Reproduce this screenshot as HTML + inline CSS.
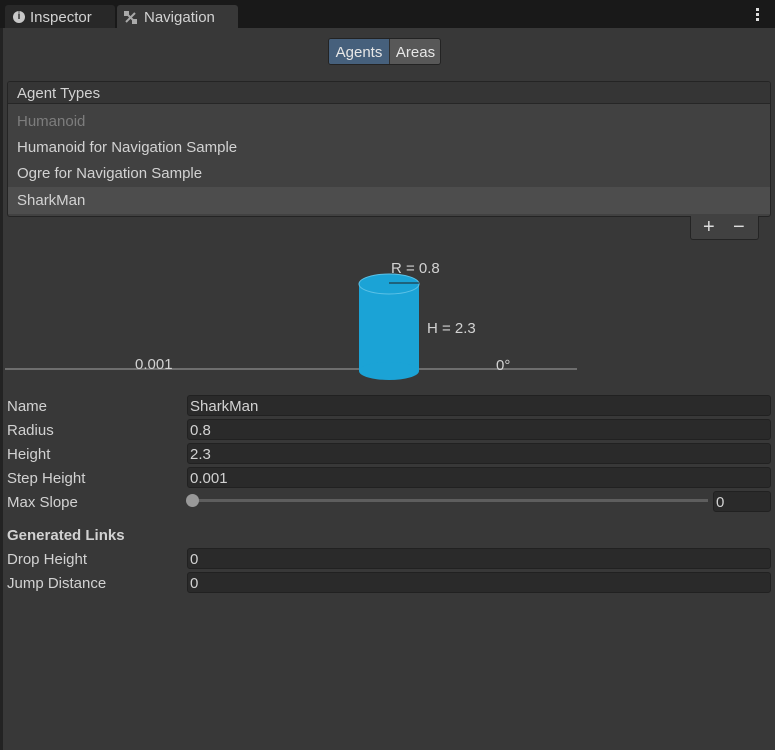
<!DOCTYPE html><html><head><style>
*{margin:0;padding:0;box-sizing:border-box}
body{width:775px;height:750px;background:#383838;font-family:"Liberation Sans",sans-serif;font-size:15px;color:#d2d2d2;position:relative;overflow:hidden}
.a{position:absolute}
.fld{position:absolute;left:187px;width:584px;height:21px;background:#2a2a2a;border:1px solid #212121;border-radius:3px;padding-left:2px;padding-top:1px;line-height:20px;color:#d2d2d2}
.lbl{position:absolute;left:7px;line-height:20px}
</style></head><body>
<div class="a" style="left:0;top:0;width:775px;height:28px;background:#191919"></div>
<div class="a" style="left:0;top:28px;width:3px;height:722px;background:#232323"></div>
<div class="a" style="left:5px;top:5px;width:110px;height:23px;background:#282828;border-radius:3px 3px 0 0"></div>
<div class="a" style="left:13px;top:11px;width:12px;height:12px;border-radius:50%;background:#c8c8c8;color:#282828;font-size:10px;font-weight:bold;text-align:center;line-height:12px">i</div>
<div class="a" style="left:30px;top:9px;line-height:18px;color:#d2d2d2">Inspector</div>
<div class="a" style="left:117px;top:5px;width:121px;height:23px;background:#383838;border-radius:3px 3px 0 0"></div>
<svg class="a" style="left:124px;top:11px" width="13" height="13" viewBox="0 0 13 13"><g stroke="#aaa" stroke-width="2"><path d="M2 2L11 11M11 2L2 11"/></g><rect x="0" y="0" width="5" height="5" fill="#aaa"/><rect x="8" y="8" width="5" height="5" fill="#aaa"/></svg>
<div class="a" style="left:144px;top:9px;line-height:18px;color:#d2d2d2">Navigation</div>
<div class="a" style="left:756px;top:8px;width:3px;height:14px;background:repeating-linear-gradient(#ddd 0 3px,transparent 3px 5px)"></div>
<div class="a" style="left:328px;top:38px;width:113px;height:27px;border:1px solid #232323;border-radius:3px;background:#585858;overflow:hidden">
<div class="a" style="left:0;top:0;width:60px;height:25px;background:#46607c"></div>
<div class="a" style="left:0;top:1px;width:60px;height:25px;color:#e6e6e6;text-align:center;line-height:25px">Agents</div>
<div class="a" style="left:60px;top:0;width:1px;height:25px;background:#303030"></div>
<div class="a" style="left:61px;top:1px;width:51px;height:25px;color:#e6e6e6;text-align:center;line-height:25px">Areas</div></div>
<div class="a" style="left:7px;top:81px;width:764px;height:136px;border:1px solid #242424;border-radius:3px;background:#414141;overflow:hidden">
<div class="a" style="left:0;top:0;width:762px;height:22px;background:#353535;border-bottom:1px solid #262626;padding-left:9px;line-height:24px">Agent Types</div>
<div class="a" style="left:9px;top:31px;color:#7d7d7d">Humanoid</div>
<div class="a" style="left:9px;top:57px">Humanoid for Navigation Sample</div>
<div class="a" style="left:9px;top:83px">Ogre for Navigation Sample</div>
<div class="a" style="left:0;top:105px;width:762px;height:27px;background:#4d4d4d;padding-left:9px;line-height:28px">SharkMan</div></div>
<div class="a" style="left:690px;top:216px;width:69px;height:24px;background:#414141;border:1px solid #242424;border-top:none;border-radius:0 0 3px 3px;color:#ddd;font-size:20px;line-height:22px"><span class="a" style="left:12px">+</span><span class="a" style="left:42px">−</span></div>
<svg class="a" style="left:0;top:255px" width="600" height="130">
<line x1="5" y1="114" x2="577" y2="114" stroke="#6e6e6e" stroke-width="2"/>
<rect x="359" y="29" width="60" height="87" fill="#1ba3d6"/>
<ellipse cx="389" cy="116" rx="30" ry="9" fill="#1ba3d6"/>
<ellipse cx="389" cy="29" rx="30" ry="10" fill="#1ba3d6" stroke="#5cc1e6" stroke-width="1"/>
<line x1="389" y1="28" x2="419" y2="28" stroke="#222" stroke-width="1"/>
<text x="391" y="18" fill="#d2d2d2" font-family="Liberation Sans" font-size="15">R = 0.8</text>
<text x="427" y="78" fill="#d2d2d2" font-family="Liberation Sans" font-size="15">H = 2.3</text>
<text x="135" y="114" fill="#d2d2d2" font-family="Liberation Sans" font-size="15">0.001</text>
<text x="496" y="115" fill="#d2d2d2" font-family="Liberation Sans" font-size="15">0°</text>
</svg>
<div class="lbl" style="top:397px">Name</div><div class="fld" style="top:395px">SharkMan</div>
<div class="lbl" style="top:421px">Radius</div><div class="fld" style="top:419px">0.8</div>
<div class="lbl" style="top:445px">Height</div><div class="fld" style="top:443px">2.3</div>
<div class="lbl" style="top:469px">Step Height</div><div class="fld" style="top:467px">0.001</div>
<div class="lbl" style="top:493px">Max Slope</div>
<div class="a" style="left:190px;top:499px;width:518px;height:3px;background:#5e5e5e"></div>
<div class="a" style="left:186px;top:494px;width:13px;height:13px;border-radius:50%;background:#999"></div>
<div class="fld" style="left:713px;width:58px;top:491px">0</div>
<div class="lbl" style="top:526px;font-weight:bold">Generated Links</div>
<div class="lbl" style="top:550px">Drop Height</div><div class="fld" style="top:548px">0</div>
<div class="lbl" style="top:574px">Jump Distance</div><div class="fld" style="top:572px">0</div>
</body></html>
